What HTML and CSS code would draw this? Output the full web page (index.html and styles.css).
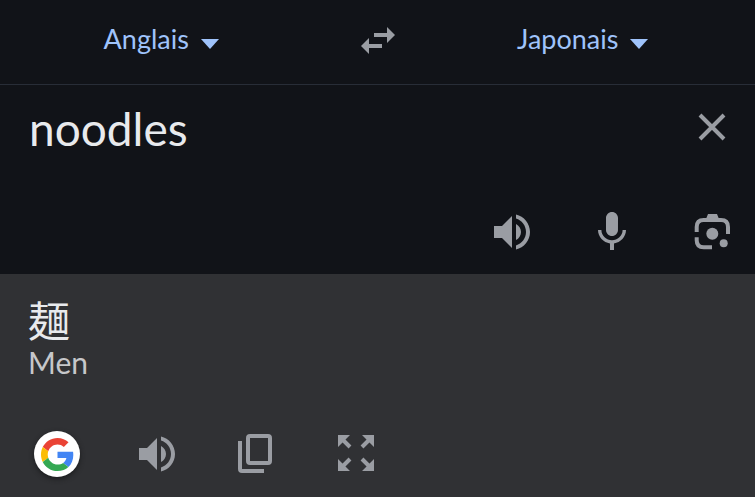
FILE: index.html
```html
<!DOCTYPE html>
<html lang="fr">
<head>
<meta charset="utf-8">
<meta name="viewport" content="width=device-width, initial-scale=1">
<title>Traduction</title>
<link rel="stylesheet" href="styles.css">
</head>
<body>
<main class="translator">
  <header class="languages">
    <button class="language" type="button">Anglais
      <svg class="caret" viewBox="0 0 18 10" aria-hidden="true"><path d="M0 0H18L9 10Z"/></svg>
    </button>
    <button class="icon-button" type="button" aria-label="Inverser les langues">
      <svg class="icon" viewBox="0 0 48 48"><path d="M20 18H33V12L41 20L33 28V22H20ZM28 29H15V23L7 31L15 39V33H28Z"/></svg>
    </button>
    <button class="language language-target" type="button">Japonais
      <svg class="caret" viewBox="0 0 18 10" aria-hidden="true"><path d="M0 0H18L9 10Z"/></svg>
    </button>
  </header>

  <section class="source">
    <div class="entry">
      <textarea class="source-text" rows="1" aria-label="Texte à traduire" spellcheck="false">noodles</textarea>
      <button class="icon-button" type="button" aria-label="Effacer">
        <svg class="icon" viewBox="0 0 48 48"><path class="line" d="M12 12L36 36M36 12L12 36"/></svg>
      </button>
    </div>
    <div class="actions actions-source">
      <button class="icon-button" type="button" aria-label="Écouter">
        <svg class="icon" viewBox="0 0 24 24"><path d="M3 9v6h4l5 5V4L7 9H3zm13.5 3c0-1.77-1.02-3.29-2.5-4.03v8.05c1.48-.73 2.5-2.25 2.5-4.02zM14 3.23v2.06c2.89.86 5 3.54 5 6.71s-2.11 5.85-5 6.71v2.06c4.01-.91 7-4.49 7-8.77s-2.99-7.86-7-8.77z"/></svg>
      </button>
      <button class="icon-button" type="button" aria-label="Dicter">
        <svg class="icon" viewBox="0 0 24 24"><path d="M12 14c1.66 0 2.99-1.34 2.99-3L15 5c0-1.66-1.34-3-3-3S9 3.34 9 5v6c0 1.66 1.34 3 3 3zm5.3-3c0 3-2.54 5.1-5.3 5.1S6.7 14 6.7 11H5c0 3.41 2.72 6.23 6 6.72V21h2v-3.28c3.28-.48 6-3.3 6-6.72h-1.7z"/></svg>
      </button>
      <button class="icon-button" type="button" aria-label="Appareil photo">
        <svg class="icon" viewBox="0 0 48 48">
          <path class="line" d="M8.700 24V19Q8.700 12 15.700 12H33Q40 12 40 19V26M8.700 29.300V32.300Q8.700 39.300 15.700 39.300H24"/>
          <path d="M18 11L20 6H29L31 11Z"/>
          <circle cx="24.300" cy="25.700" r="6"/><circle cx="35.700" cy="35.300" r="4"/>
        </svg>
      </button>
    </div>
  </section>

  <section class="result">
    <p class="translation" lang="ja">麺</p>
    <p class="romanization">Men</p>
    <div class="actions actions-result">
      <button class="icon-button google" type="button" aria-label="Rechercher sur Google">
        <svg class="google-logo" viewBox="0 0 48 48">
          <path fill="#ea4335" d="M24 9.500c3.540 0 6.710 1.220 9.210 3.600l6.850-6.850C35.900 2.380 30.470 0 24 0 14.620 0 6.510 5.380 2.560 13.220l7.980 6.190C12.430 13.720 17.740 9.500 24 9.500z"/>
          <path fill="#4285f4" d="M46.980 24.550c0-1.570-.15-3.090-.38-4.550H24v9.020h12.940c-.58 2.960-2.260 5.480-4.780 7.180l7.730 6c4.510-4.180 7.090-10.360 7.090-17.650z"/>
          <path fill="#fbbc05" d="M10.530 28.590c-.48-1.450-.76-2.990-.76-4.590s.27-3.140.76-4.590l-7.980-6.190C.92 16.460 0 20.120 0 24c0 3.880.92 7.540 2.560 10.780l7.970-6.190z"/>
          <path fill="#34a853" d="M24 48c6.480 0 11.930-2.130 15.890-5.810l-7.730-6c-2.150 1.450-4.920 2.300-8.160 2.300-6.260 0-11.570-4.220-13.470-9.910l-7.980 6.190C6.510 42.620 14.620 48 24 48z"/>
        </svg>
      </button>
      <button class="icon-button" type="button" aria-label="Écouter la traduction">
        <svg class="icon" viewBox="0 0 24 24"><path d="M3 9v6h4l5 5V4L7 9H3zm13.5 3c0-1.77-1.02-3.29-2.5-4.03v8.05c1.48-.73 2.5-2.25 2.5-4.02zM14 3.23v2.06c2.89.86 5 3.54 5 6.71s-2.11 5.85-5 6.71v2.06c4.01-.91 7-4.49 7-8.77s-2.99-7.86-7-8.77z"/></svg>
      </button>
      <button class="icon-button" type="button" aria-label="Copier">
        <svg class="icon" viewBox="0 0 48 48"><rect class="line" x="15" y="6" width="22" height="27" rx="2"/><path class="line" d="M7 11V39Q7 41 9 41H31"/></svg>
      </button>
      <button class="icon-button" type="button" aria-label="Plein écran">
        <svg class="icon" viewBox="0 0 48 48">
          <path d="M5 5H17L5 17ZM41 5H29L41 17ZM5 41H17L5 29ZM41 41H29L41 29Z"/>
          <path class="line" d="M9 9L17 17M37 9L29 17M9 37L17 29M37 37L29 29"/>
        </svg>
      </button>
    </div>
  </section>
</main>
</body>
</html>
```

FILE: styles.css
```css
* {
  box-sizing: border-box;
}

body {
  margin: 0;
  background: #303134;
  font-family: Lato, "Noto Sans CJK JP", sans-serif;
}

button {
  margin: 0;
  padding: 0;
  border: 0;
  background: none;
  color: inherit;
  font: inherit;
  cursor: pointer;
}

.translator {
  display: flex;
  flex-direction: column;
  min-height: 100vh;
}

.languages {
  display: grid;
  grid-template-columns: 1fr 110px 1fr;
  align-items: center;
  justify-items: center;
  padding: 15px 0 21px;
  border-bottom: 1px solid #282d37;
  background: #111318;
}

.language {
  display: flex;
  align-items: center;
  gap: 12px;
  color: #9fc3fb;
  font-size: 27px;
  line-height: 32px;
}

.language-target {
  margin-right: 22px;
}

.caret {
  width: 18px;
  height: 10px;
  margin-top: 10px;
  fill: currentColor;
}

.icon-button {
  display: flex;
  flex: none;
  align-items: center;
  justify-content: center;
  width: 48px;
  height: 48px;
  color: #9a9da3;
}

.icon {
  width: 48px;
  height: 48px;
  fill: currentColor;
}

.icon .line {
  fill: none;
  stroke: currentColor;
  stroke-width: 4;
}

.source {
  padding: 18px 19px 18px 29px;
  background: #111318;
}

.entry {
  display: flex;
  align-items: flex-start;
}

.source-text {
  flex: 1;
  min-width: 0;
  height: 52px;
  padding: 0;
  border: 0;
  outline: 0;
  background: none;
  color: #e8eaed;
  font: inherit;
  font-size: 46px;
  line-height: 52px;
  resize: none;
  overflow: hidden;
}

.actions {
  display: flex;
  gap: 52px;
}

.actions-source {
  justify-content: flex-end;
  margin-top: 53px;
}

.result {
  flex: 1;
  padding: 20px 28px 19px;
  background: #303134;
}

.translation,
.romanization {
  margin: 0;
}

.translation {
  color: #e8eaed;
  font-family: "Noto Sans CJK JP", sans-serif;
  font-size: 42px;
  line-height: 50px;
}

.romanization {
  color: #c6c7ca;
  font-size: 30px;
  line-height: 36px;
}

.actions-result {
  margin-top: 50px;
  padding-left: 5px;
}

.google {
  display: grid;
  place-items: center;
  place-content: center;
}

.google::before {
  content: "";
  grid-area: 1 / 1;
  width: 46px;
  height: 46px;
  border-radius: 50%;
  background: #fff;
  box-shadow: 0 2px 5px #1b1c1e;
}

.google-logo {
  grid-area: 1 / 1;
  width: 33px;
  height: 33px;
}
```
